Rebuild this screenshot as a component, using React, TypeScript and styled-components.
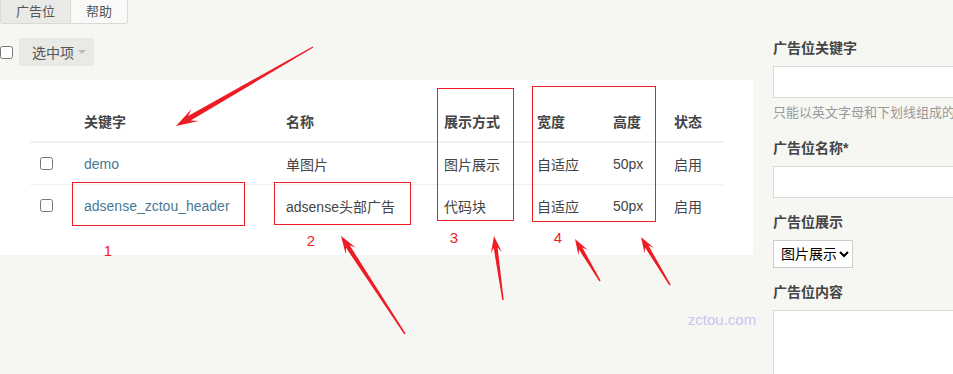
import React from "react";
import styled, { createGlobalStyle } from "styled-components";

const GlobalStyle = createGlobalStyle`
  html, body { margin: 0; padding: 0; background: #f6f6f3; overflow: hidden; }
  body { font-family: "Liberation Sans", "Noto Sans CJK SC", sans-serif; font-size: 14px; color: #444; }
  * { box-sizing: border-box; }
`;

const Page = styled.div`
  position: relative;
  width: 953px;
  height: 374px;
  overflow: hidden;
  display: flex;
  align-items: flex-start;
`;

const Main = styled.div`
  width: 753px;
  flex: none;
  display: flex;
  flex-direction: column;
`;

const Tabs = styled.ul`
  list-style: none;
  margin: -1px 0 0;
  padding: 0;
  display: flex;
`;

const Tab = styled.li<{ $current?: boolean }>`
  margin-right: -1px;
  border: 1px solid #d9d9d6;
  padding: 0 15px;
  height: 25px;
  line-height: 23px;
  font-size: 13px;
  color: #555;
  background: ${(p) => (p.$current ? "#e9e9e6" : "#f9f9f7")};
  &:first-child { border-radius: 0 0 0 2px; }
  &:last-child { border-radius: 0 0 2px 0; }
`;

const Toolbar = styled.div`
  margin-top: 14px;
  height: 28px;
  display: flex;
  align-items: center;
  gap: 6px;
`;

const Check = styled.input.attrs({ type: "checkbox" })`
  margin: 0;
  width: 13px;
  height: 13px;
`;

const DropButton = styled.div`
  height: 28px;
  padding: 0 8px 0 13px;
  display: flex;
  align-items: center;
  gap: 4px;
  background: #e9e9e6;
  border-radius: 2px;
  color: #555;
  font-size: 14px;
`;

const Caret = styled.span`
  width: 0;
  height: 0;
  border-left: 4px solid transparent;
  border-right: 4px solid transparent;
  border-top: 4px solid #bbb;
  margin-top: -1px;
`;

const Panel = styled.div`
  margin-top: 14px;
  background: #fff;
  padding: 20px 30px 29px;
`;

const Row = styled.div<{ $head?: boolean; $divided?: boolean }>`
  display: grid;
  grid-template-columns: 44px 202px 158px 93px 76px 61px 59px;
  height: ${(p) => (p.$head ? "43px" : p.$divided ? "42px" : "41px")};
  align-items: center;
  border-bottom: ${(p) => (p.$head ? "2px solid #f0f0ec" : "none")};
  border-top: ${(p) => (p.$divided ? "1px solid #f0f0ec" : "none")};
  font-weight: ${(p) => (p.$head ? "bold" : "normal")};
`;

const Cell = styled.div`
  padding-left: 10px;
  display: flex;
  align-items: center;
  white-space: nowrap;
`;

const Link = styled.a`
  color: #467b96;
  text-decoration: none;
`;

const Side = styled.div`
  margin-left: 20px;
  width: 420px;
  flex: none;
  padding-top: 38px;
  display: flex;
  flex-direction: column;
`;

const Field = styled.div<{ $gap?: number }>`
  margin-bottom: ${(p) => p.$gap ?? 14}px;
  display: flex;
  flex-direction: column;
`;

const Label = styled.label`
  font-weight: bold;
  line-height: 20px;
  margin-bottom: 8px;
  color: #444;
`;

const TextInput = styled.input`
  height: 32px;
  width: 100%;
  border: 1px solid #d9d9d6;
  background: #fff;
  margin: 0;
`;

const Hint = styled.div`
  margin-top: 7px;
  line-height: 16px;
  font-size: 13px;
  color: #999;
  white-space: nowrap;
`;

const Select = styled.select`
  width: 80px;
  height: 28px;
  border: 1px solid #ccc;
  background: #fff;
  color: #000;
  font-family: "Liberation Sans", "Noto Sans CJK SC", sans-serif;
  font-size: 14px;
  padding: 0 0 0 3px;
  border-radius: 0;
`;

const TextArea = styled.textarea`
  width: 100%;
  height: 120px;
  border: 1px solid #d9d9d6;
  background: #fff;
  margin: 0;
  resize: none;
`;

const Overlay = styled.svg`
  position: absolute;
  left: 0;
  top: 0;
  width: 953px;
  height: 374px;
  pointer-events: none;
`;

const RED = "#ee1c25";

function arrow(tx: number, ty: number, px: number, py: number, L: number, W: number, w: number) {
  const dx = px - tx;
  const dy = py - ty;
  const len = Math.hypot(dx, dy);
  const ux = dx / len;
  const uy = dy / len;
  const nx = -uy;
  const ny = ux;
  const pt = (x: number, y: number) => `${x.toFixed(1)},${y.toFixed(1)}`;
  return [
    pt(px, py),
    pt(px - ux * L + nx * W, py - uy * L + ny * W),
    pt(px - ux * L * 0.7 + nx * w, py - uy * L * 0.7 + ny * w),
    pt(tx + nx * 0.7, ty + ny * 0.7),
    pt(tx - nx * 0.7, ty - ny * 0.7),
    pt(px - ux * L * 0.7 - nx * w, py - uy * L * 0.7 - ny * w),
    pt(px - ux * L - nx * W, py - uy * L - ny * W),
  ].join(" ");
}

const arrows = [
  [313, 47, 176, 126, 22, 7, 2.5],
  [405, 334, 341, 236, 18, 6, 2.2],
  [503, 300, 494, 236, 17, 5.5, 2],
  [600, 281, 575, 239, 16, 5.5, 2],
  [670, 285, 641, 237, 16, 5.5, 2],
];

const rows = [
  { key: "demo", name: "单图片", mode: "图片展示", w: "自适应", h: "50px", st: "启用" },
  { key: "adsense_zctou_header", name: "adsense头部广告", mode: "代码块", w: "自适应", h: "50px", st: "启用" },
];

export default function App() {
  return (
    <>
      <GlobalStyle />
      <Page>
        <Main>
          <Tabs>
            <Tab $current>广告位</Tab>
            <Tab>帮助</Tab>
          </Tabs>
          <Toolbar>
            <Check />
            <DropButton>
              选中项 <Caret />
            </DropButton>
          </Toolbar>
          <Panel>
            <Row $head>
              <Cell />
              <Cell>关键字</Cell>
              <Cell>名称</Cell>
              <Cell>展示方式</Cell>
              <Cell>宽度</Cell>
              <Cell>高度</Cell>
              <Cell>状态</Cell>
            </Row>
            {rows.map((r, i) => (
              <Row key={r.key} $divided={i > 0}>
                <Cell>
                  <Check />
                </Cell>
                <Cell>
                  <Link href="#">{r.key}</Link>
                </Cell>
                <Cell>{r.name}</Cell>
                <Cell>{r.mode}</Cell>
                <Cell>{r.w}</Cell>
                <Cell>{r.h}</Cell>
                <Cell>{r.st}</Cell>
              </Row>
            ))}
          </Panel>
        </Main>
        <Side>
          <Field $gap={17}>
            <Label>广告位关键字</Label>
            <TextInput />
            <Hint>只能以英文字母和下划线组成的关键字</Hint>
          </Field>
          <Field>
            <Label>广告位名称*</Label>
            <TextInput />
          </Field>
          <Field>
            <Label>广告位展示</Label>
            <Select defaultValue="img">
              <option value="img">图片展示</option>
              <option value="code">代码块</option>
            </Select>
          </Field>
          <Field>
            <Label>广告位内容</Label>
            <TextArea />
          </Field>
        </Side>
        <Overlay viewBox="0 0 953 374">
          <g fill="none" stroke={RED} strokeWidth="1">
            <rect x="72.5" y="182.5" width="172" height="43" />
            <rect x="274.5" y="182.5" width="136" height="42" />
            <rect x="437.5" y="88.5" width="76" height="132" />
            <rect x="532.5" y="86.5" width="123" height="135" />
          </g>
          <g fill={RED}>
            {arrows.map((a, i) => (
              <polygon key={i} points={arrow(a[0], a[1], a[2], a[3], a[4], a[5], a[6])} />
            ))}
          </g>
          <g fill={RED} fontFamily="Liberation Sans, sans-serif" fontSize="15" textAnchor="middle">
            <text x="108" y="256">1</text>
            <text x="311" y="246">2</text>
            <text x="454" y="243">3</text>
            <text x="558" y="243">4</text>
          </g>
          <text x="722" y="325" fill="#cbc5f2" fontFamily="Liberation Sans, sans-serif" fontSize="15" textAnchor="middle">
            zctou.com
          </text>
        </Overlay>
      </Page>
    </>
  );
}
